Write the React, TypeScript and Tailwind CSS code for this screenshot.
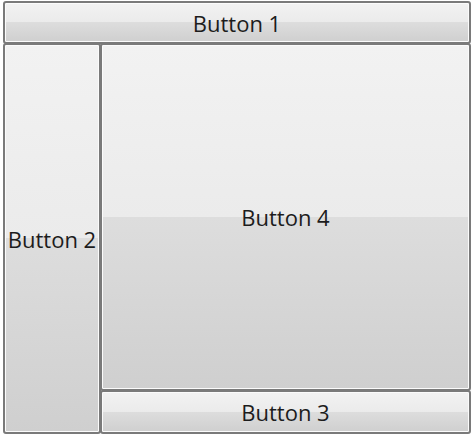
import React from "react";

const AeroButton = ({ label, className }: { label: string; className: string }) => {
  return (
    <button
      className={`flex items-center justify-center rounded-[3px] border-2 border-[#7a7a7a] bg-[linear-gradient(to_bottom,#f2f2f2_0%,#ebebeb_50%,#dddddd_50%,#cfcfcf_100%)] shadow-[inset_0_0_0_1px_#fbfbfb] text-[22px] leading-none text-[#1c1c1c] ${className}`}
      style={{ fontFamily: '"Open Sans", "Noto Sans", sans-serif' }}
    >
      {label}
    </button>
  );
};

const App = () => {
  return (
    <main className="flex h-[437px] w-[474px] flex-col bg-white pb-[3px] pl-[3px] pr-[3px] pt-px">
      <AeroButton label="Button 1" className="h-[43px] w-full shrink-0" />
      <div className="-mt-px flex min-h-0 flex-1">
        <AeroButton label="Button 2" className="h-full w-[98px] shrink-0" />
        <div className="-ml-px flex min-w-0 flex-1 flex-col">
          <AeroButton label="Button 4" className="min-h-0 w-full flex-1" />
          <AeroButton label="Button 3" className="-mt-px h-[44px] w-full shrink-0" />
        </div>
      </div>
    </main>
  );
};

export default App;
